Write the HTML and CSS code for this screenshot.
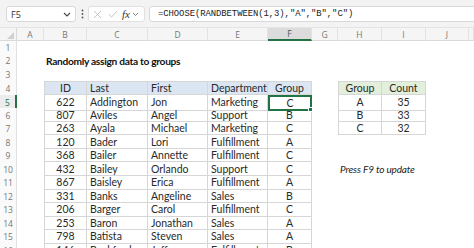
FILE: index.html
```html
<!DOCTYPE html>
<html>
<head>
<meta charset="utf-8">
<link rel="stylesheet" href="styles.css">
</head>
<body>
<div class="app">
  <div class="fbar">
    <div class="namebox">
      <span class="nb-text">F5</span>
      <svg class="chev" width="8" height="5" viewBox="0 0 8 5"><path d="M1 1 L4 4 L7 1" fill="none" stroke="#444" stroke-width="1.1"/></svg>
    </div>
    <div class="dots">
      <svg width="3" height="10" viewBox="0 0 3 10"><circle cx="1.5" cy="1.5" r="0.9" fill="#555"/><circle cx="1.5" cy="5" r="0.9" fill="#555"/><circle cx="1.5" cy="8.5" r="0.9" fill="#555"/></svg>
    </div>
    <div class="fxbox">
      <svg class="ic-x" width="9" height="9" viewBox="0 0 9 9"><path d="M1 1 L8 8 M8 1 L1 8" stroke="#c4c4c4" stroke-width="1"/></svg>
      <svg class="ic-ok" width="10" height="8" viewBox="0 0 10 8"><path d="M1 4.5 L3.6 7 L9 1" fill="none" stroke="#c4c4c4" stroke-width="1"/></svg>
      <span class="fx">fx</span>
      <svg class="chev2" width="7" height="5" viewBox="0 0 7 5"><path d="M1 1 L3.5 3.5 L6 1" fill="none" stroke="#888" stroke-width="1"/></svg>
    </div>
    <div class="formula">=CHOOSE(RANDBETWEEN(1,3),"A","B","C")</div>
  </div>

  <div class="sheet">
    <div class="row colhdr">
      <div class="corner"><span class="tri"></span></div>
      <div class="ch">A</div><div class="ch">B</div><div class="ch">C</div><div class="ch">D</div><div class="ch">E</div>
      <div class="ch sel">F</div><div class="ch">G</div><div class="ch">H</div><div class="ch">I</div><div class="ch">J</div><div class="ch"></div>
    </div>

    <div class="row"><div class="rh">1</div></div>
    <div class="row"><div class="rh">2</div><div></div><div class="title">Randomly assign data to groups</div></div>
    <div class="row"><div class="rh">3</div></div>

    <div class="row">
      <div class="rh">4</div><div></div>
      <div class="t h1 c first top">ID</div><div class="t h1 l top">Last</div><div class="t h1 l top">First</div><div class="t h1 l top">Department</div><div class="t h1 c top">Group</div>
      <div></div>
      <div class="t h2 c first top">Group</div><div class="t h2 c top">Count</div>
    </div>
    <div class="row">
      <div class="rh rsel">5</div><div></div>
      <div class="t c first">622</div><div class="t l">Addington</div><div class="t l">Jon</div><div class="t l">Marketing</div><div class="t c cell-sel">C<span class="handle"></span></div>
      <div></div>
      <div class="t c first">A</div><div class="t c">35</div>
    </div>
    <div class="row">
      <div class="rh">6</div><div></div>
      <div class="t c first">807</div><div class="t l">Aviles</div><div class="t l">Angel</div><div class="t l">Support</div><div class="t c">B</div>
      <div></div>
      <div class="t c first">B</div><div class="t c">33</div>
    </div>
    <div class="row">
      <div class="rh">7</div><div></div>
      <div class="t c first">263</div><div class="t l">Ayala</div><div class="t l">Michael</div><div class="t l">Marketing</div><div class="t c">C</div>
      <div></div>
      <div class="t c first">C</div><div class="t c">32</div>
    </div>
    <div class="row">
      <div class="rh">8</div><div></div>
      <div class="t c first">120</div><div class="t l">Bader</div><div class="t l">Lori</div><div class="t l">Fulfillment</div><div class="t c">A</div>
    </div>
    <div class="row">
      <div class="rh">9</div><div></div>
      <div class="t c first">368</div><div class="t l">Bailer</div><div class="t l">Annette</div><div class="t l">Fulfillment</div><div class="t c">C</div>
    </div>
    <div class="row">
      <div class="rh">10</div><div></div>
      <div class="t c first">432</div><div class="t l">Bailey</div><div class="t l">Orlando</div><div class="t l">Support</div><div class="t c">C</div>
      <div></div>
      <div class="note">Press F9 to update</div>
    </div>
    <div class="row">
      <div class="rh">11</div><div></div>
      <div class="t c first">867</div><div class="t l">Baisley</div><div class="t l">Erica</div><div class="t l">Fulfillment</div><div class="t c">A</div>
    </div>
    <div class="row">
      <div class="rh">12</div><div></div>
      <div class="t c first">331</div><div class="t l">Banks</div><div class="t l">Angeline</div><div class="t l">Sales</div><div class="t c">B</div>
    </div>
    <div class="row">
      <div class="rh">13</div><div></div>
      <div class="t c first">206</div><div class="t l">Barger</div><div class="t l">Carol</div><div class="t l">Fulfillment</div><div class="t c">C</div>
    </div>
    <div class="row">
      <div class="rh">14</div><div></div>
      <div class="t c first">253</div><div class="t l">Baron</div><div class="t l">Jonathan</div><div class="t l">Sales</div><div class="t c">A</div>
    </div>
    <div class="row">
      <div class="rh">15</div><div></div>
      <div class="t c first">798</div><div class="t l">Batista</div><div class="t l">Steven</div><div class="t l">Sales</div><div class="t c">A</div>
    </div>
    <div class="row">
      <div class="rh">16</div><div></div>
      <div class="t c first">146</div><div class="t l">Beckford</div><div class="t l">Jeffrey</div><div class="t l">Fulfillment</div><div class="t c">B</div>
    </div>
  </div>
</div>
</body>
</html>
```

FILE: styles.css
```css
* { box-sizing: border-box; }
html, body { margin: 0; padding: 0; background: #ffffff; }
body { width: 474px; height: 248px; overflow: hidden; font-family: Lato, "Open Sans", sans-serif; color: #222; }

.app { width: 474px; height: 248px; overflow: hidden; }

.fbar {
  height: 27px;
  background: #f3f3f3;
  display: flex;
  align-items: flex-start;
  padding: 6px 0 0 6px;
}
.namebox {
  width: 70px; height: 16px;
  background: #fff;
  border: 1px solid #d9d9d9;
  border-radius: 3px;
  display: flex; align-items: center; justify-content: space-between;
  padding: 0 4px 0 4px;
}
.nb-text { font-family: "Open Sans", sans-serif; font-size: 9px; color: #333; }
.dots { width: 12px; height: 16px; display: flex; align-items: center; justify-content: center; }
.fxbox {
  width: 57px; height: 16px;
  background: #fff;
  border: 1px solid #e0e0e0;
  border-radius: 3px;
  display: flex; align-items: center;
  padding-left: 4px;
}
.ic-x { margin-right: 6px; }
.ic-ok { margin-right: 4px; }
.fx { font-family: "Liberation Serif", serif; font-style: italic; font-size: 11px; color: #333; margin-right: 2px; line-height: 1; }
.formula {
  flex: 1;
  height: 16px;
  margin-left: 4px;
  margin-right: -6px;
  background: #fff;
  border: 1px solid #d9d9d9;
  border-radius: 3px;
  padding-left: 8px;
  font-family: "Liberation Mono", monospace;
  font-size: 8.9px;
  letter-spacing: -0.05px;
  line-height: 14px;
  color: #222;
  white-space: nowrap;
}

.sheet { display: flex; flex-direction: column; }
.row {
  display: grid;
  grid-template-columns: 17px 27px 43px 61px 60px 60px 44px 26px 44px 44px 43px 1fr;
  height: 13.55px;
  font-size: 10.5px;
}
.colhdr {
  height: 13.5px;
  background: #f5f5f5;
  border-top: 1px solid #e4e4e4;
  border-bottom: 1px solid #dadada;
}
.corner { position: relative; border-right: 1px solid #dadada; }
.tri {
  position: absolute; right: 2px; bottom: 2px;
  width: 0; height: 0;
  border-left: 7px solid transparent;
  border-bottom: 7px solid #d0d0d0;
}
.ch {
  font-family: "Open Sans", sans-serif;
  font-size: 8.5px; color: #777;
  display: flex; align-items: center; justify-content: center;
  border-right: 1px solid #e2e2e2;
}
.ch.sel { background: #dcdcdc; border-bottom: 2px solid #217346; color: #555; }

.rh {
  font-family: "Open Sans", sans-serif;
  font-size: 8.5px; color: #777;
  display: flex; align-items: center; justify-content: center;
  border-right: 1px solid #e2e2e2;
  background: #fafafa;
}
.rh.rsel { color: #217346; border-right: 2px solid #217346; background: #ececec; }

.title { grid-column: 3 / span 4; font-weight: bold; font-size: 10.2px; letter-spacing: -0.3px; display: flex; align-items: center; padding-left: 2px; white-space: nowrap; color: #111; }

.t {
  display: flex; align-items: center;
  border-right: 1px solid #d6d6d6;
  border-bottom: 1px solid #d6d6d6;
  white-space: nowrap;
  color: #2a2a2a;
}
.t.first { border-left: 1px solid #d6d6d6; }
.t.top { border-top: 1px solid #d6d6d6; }
.t.c { justify-content: center; }
.t.l { padding-left: 3px; }
.t.h1 { background: #dce6f2; }
.t.h2 { background: #e2efda; }

.cell-sel { position: relative; border: 2px solid #217346 !important; }
.handle {
  position: absolute; right: -3px; bottom: -3px;
  width: 5px; height: 5px;
  background: #217346;
  border: 1px solid #fff;
}

.note { grid-column: 9 / span 3; font-style: italic; font-size: 10px; letter-spacing: -0.15px; display: flex; align-items: center; padding-left: 2px; white-space: nowrap; color: #222; }
```
